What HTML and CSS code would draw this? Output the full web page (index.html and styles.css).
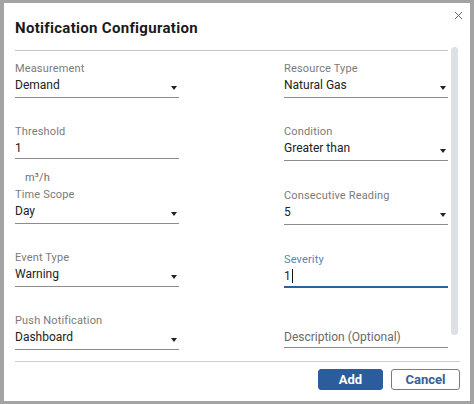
FILE: index.html
```html
<!DOCTYPE html>
<html>
<head>
<meta charset="utf-8">
<link rel="stylesheet" href="styles.css">
</head>
<body>
<div class="dialog">
  <div class="header">
    <div class="title">Notification Configuration</div>
    <svg class="close" width="9" height="9" viewBox="0 0 9 9"><path d="M1 1 L8 8 M8 1 L1 8" stroke="#666" stroke-width="1" fill="none"/></svg>
  </div>
  <div class="scroll">
    <div class="scroll-content">
      <div class="divider-top"></div>
      <div class="columns">
        <div class="col">
          <div class="field select">
            <div class="label">Measurement</div>
            <div class="value">Demand<span class="arrow"></span></div>
          </div>
          <div class="field text gap">
            <div class="label">Threshold</div>
            <div class="value">1</div>
          </div>
          <div class="helper">m³/h</div>
          <div class="field select after-helper">
            <div class="label">Time Scope</div>
            <div class="value">Day<span class="arrow"></span></div>
          </div>
          <div class="field select gap">
            <div class="label">Event Type</div>
            <div class="value">Warning<span class="arrow"></span></div>
          </div>
          <div class="field select gap">
            <div class="label">Push Notification</div>
            <div class="value">Dashboard<span class="arrow"></span></div>
          </div>
        </div>
        <div class="col">
          <div class="field select">
            <div class="label">Resource Type</div>
            <div class="value">Natural Gas<span class="arrow"></span></div>
          </div>
          <div class="field select gap">
            <div class="label">Condition</div>
            <div class="value">Greater than<span class="arrow"></span></div>
          </div>
          <div class="field select gap-lg">
            <div class="label">Consecutive Reading</div>
            <div class="value">5<span class="arrow"></span></div>
          </div>
          <div class="field text focused gap-lg">
            <div class="label">Severity</div>
            <div class="value">1<span class="caret"></span></div>
          </div>
          <div class="field text gap-sm">
            <div class="label"></div>
            <div class="value placeholder">Description (Optional)</div>
          </div>
        </div>
      </div>
    </div>
    <div class="scrollbar"></div>
  </div>
  <div class="footer">
    <div class="divider-bottom"></div>
    <div class="actions">
      <button class="btn primary">Add</button>
      <button class="btn secondary">Cancel</button>
    </div>
  </div>
</div>
</body>
</html>
```

FILE: styles.css
```css
* { box-sizing: border-box; }
html, body { margin: 0; padding: 0; background: #fff; }
body { font-family: Roboto, "Liberation Sans", sans-serif; color: #222; }

.dialog {
  width: 474px;
  height: 404px;
  border-style: solid;
  border-color: #a3a3a3;
  border-width: 3px 4px 3px 4px;
  background: #fff;
  display: flex;
  flex-direction: column;
}

.header {
  height: 41px;
  display: flex;
  justify-content: space-between;
  align-items: flex-start;
  padding: 15px 7px 0 11px;
}
.title {
  font-size: 15px;
  line-height: 20px;
  font-weight: 700;
  color: #1a1a1a;
  letter-spacing: 0.3px;
}
.close { margin-top: -7px; }

.scroll {
  height: 317px;
  display: flex;
  gap: 3px;
  padding-left: 11px;
  overflow: hidden;
}
.scroll-content { width: 433px; padding-top: 6px; }
.divider-top { height: 1px; background: #c4c4c4; }
.scrollbar {
  width: 7px;
  height: 288px;
  margin-top: 3px;
  border-radius: 4px;
  background: #dde0e4;
}

.columns {
  display: flex;
  justify-content: space-between;
  padding-top: 10px;
}
.col { width: 164px; display: flex; flex-direction: column; }

.field { border-bottom: 1px solid #8c8c8c; padding-top: 1px; }
.field.select { padding-bottom: 3px; }
.field.text { padding-bottom: 1px; }
.field.focused { border-bottom: 2px solid #2f5f9c; }
.field.focused .label { color: #5a82bb; }
.gap { margin-top: 26px; }
.gap-lg { margin-top: 27px; }
.gap-sm { margin-top: 25px; }
.after-helper { margin-top: 2px; }

.label {
  font-size: 11px;
  line-height: 14px;
  height: 14px;
  color: #7b7b7b;
  letter-spacing: 0.15px;
}
.value {
  font-size: 12px;
  line-height: 18px;
  height: 18px;
  color: #222;
  display: flex;
  align-items: center;
}
.value.placeholder { color: #6a6a6a; }
.arrow {
  margin-left: auto;
  margin-right: 2px;
  margin-top: 6px;
  width: 0;
  height: 0;
  border-left: 3.5px solid transparent;
  border-right: 3.5px solid transparent;
  border-top: 4px solid #222;
}
.caret {
  width: 1px;
  height: 14px;
  background: #111;
  margin-left: 1px;
}

.helper {
  margin-top: 12px;
  padding-left: 10px;
  font-size: 11px;
  line-height: 14px;
  color: #6f6f6f;
  letter-spacing: 0.15px;
}

.footer { display: flex; flex-direction: column; padding: 0 10px 11px 11px; }
.divider-bottom { height: 1px; background: #cfcfcf; }
.actions {
  margin-top: 7px;
  display: flex;
  justify-content: flex-end;
  gap: 8px;
}
.btn {
  height: 21px;
  border-radius: 3px;
  font-family: Roboto, "Liberation Sans", sans-serif;
  font-size: 13px;
  font-weight: 700;
  padding: 0;
  cursor: pointer;
}
.btn.primary {
  width: 65px;
  background: #2b5d9d;
  border: 1px solid #2b5d9d;
  color: #fff;
}
.btn.secondary {
  width: 69px;
  background: #fff;
  border: 1px solid #5b80b2;
  color: #33609c;
}
```
